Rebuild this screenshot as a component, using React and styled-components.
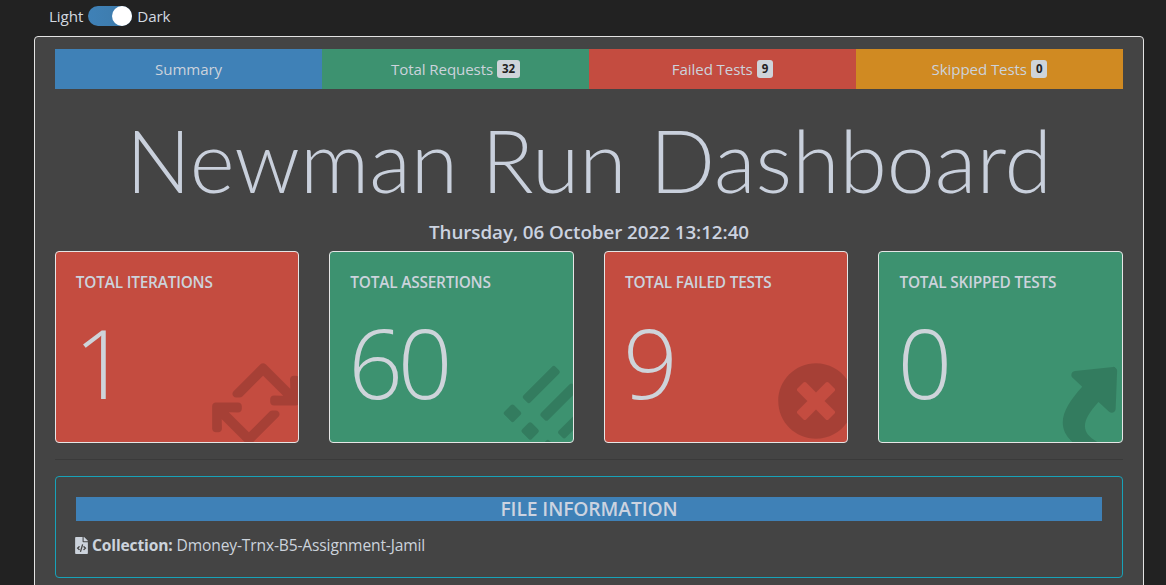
import React from "react";
import styled, { createGlobalStyle } from "styled-components";
import { FaRetweet, FaTimesCircle, FaShare, FaFileCode } from "react-icons/fa";

const Global = createGlobalStyle`
  html, body { margin: 0; height: 585px; overflow: hidden; background: #222222; }
  body { font-family: "Open Sans", "Noto Sans", "Liberation Sans", sans-serif; color: #ced4da; font-size: 15px; }
`;
const colors = { blue: "#3f81b7", green: "#3d9270", red: "#c44c40", orange: "#d08a22" };

const Page = styled.div`display: flex; flex-direction: column; width: 1110px; margin-left: 34px;`;
const ThemeBar = styled.div`display: flex; align-items: center; gap: 5px; height: 33px; padding: 0 0 0 15px;`;
const ThemeLabel = styled.span`font-size: 15.2px; color: #d3d9e0; letter-spacing: -0.1px; line-height: 33px;`;
const Switch = styled.span`display: inline-flex; justify-content: flex-end; align-items: center; width: 44px; height: 20px; border-radius: 10px; background: linear-gradient(90deg, #3f81b7, #3d7aa9); margin-bottom: 1px;`;
const Knob = styled.span`width: 20px; height: 20px; border-radius: 50%; background: #fff;`;
const Panel = styled.main`height: 560px; margin-top: 3px; box-sizing: border-box; padding: 12px 20px 0; background: #444444; border: 1px solid #e4e4e4; border-radius: 4px;`;
const Tabs = styled.nav`display: grid; grid-template-columns: repeat(4, 1fr); height: 40px;`;
const Tab = styled.a`display: flex; align-items: center; justify-content: center; gap: 4px; background: ${p => colors[p.$tone]}; color: #ccd3dc; font-size: 15.1px; letter-spacing: -0.1px;`;
const Badge = styled.span`display: inline-block; padding: 2px 5px 2px; min-width: 5px; text-align: center; border-radius: 3px; background: #ced4da; color: #222; font-size: 11.5px; font-weight: 700; line-height: 14px;`;
const Heading = styled.h1`margin: 18px 0 0; height: 111px; text-align: center; font-family: "Lato", "Open Sans", sans-serif; font-size: 86px; font-weight: 300; line-height: 105px; color: #c9d0dc; white-space: nowrap;`;
const DateLine = styled.h5`margin: 0; text-align: center; font-size: 18.8px; font-weight: 600; line-height: 24px; color: #ccd3e0; letter-spacing: -0.05px; padding-top: 2px;`;
const Cards = styled.section`display: grid; grid-template-columns: repeat(4, 1fr); gap: 30px; margin: 7px 0 0 -0.2px;`;
const Card = styled.article`position: relative; overflow: hidden; box-sizing: border-box; height: 192px; padding: 20px; background: ${p => colors[p.$tone]}; border: 1px solid #e6e6e6; border-radius: 4px;`;
const CardTitle = styled.h6`margin: 0; font-size: 15.4px; font-weight: 600; line-height: 21px; letter-spacing: -0.2px; text-transform: uppercase; color: #ccd3dc;`;
const CardValue = styled.div`margin: 11px 0 0 -2px; font-size: 96px; font-weight: 300; line-height: 115px; color: #ced4da; letter-spacing: -5.5px;`;
const CardIcon = styled.span`
  position: absolute; display: flex; color: rgba(0,0,0,.15);
  right: ${p => p.$right}px; bottom: ${p => p.$bottom}px; transform: rotate(${p => p.$rot}deg);
`;
const Rule = styled.hr`margin: 16px 0; border: 0; border-top: 1px solid #3a3a3a;`;
const InfoCard = styled.section`box-sizing: border-box; height: 102px; padding: 20px; border: 1px solid #17a2b8; border-radius: 4px;`;
const InfoTitle = styled.h5`margin: 0; background: #3f81b7; text-align: center; color: #ccd3e0; font-size: 19.3px; font-weight: 600; line-height: 24px; letter-spacing: -0.1px;`;
const InfoLine = styled.p`display: flex; align-items: center; margin: 13px 0 0; font-size: 15.6px; line-height: 22px; letter-spacing: -0.15px; color: #ccd3dc;`;
const FileIcon = styled(FaFileCode)`margin: 0 -1px 0 -3px;`;
const Strong = styled.strong`font-weight: 700; margin: 0 4px 0 3px;`;

const ListGlyph = ({ size }) => (
  <svg width={size} height={size} viewBox="0 0 512 512" fill="currentColor">
    {[48, 208, 368].map(y => (
      <g key={y}>
        <rect x="0" y={y} width="88" height="88" rx="16" />
        <rect x="160" y={y + 12} width="290" height="64" rx="16" />
      </g>
    ))}
  </svg>
);

const tabs = [["blue", "Summary"], ["green", "Total Requests", 32], ["red", "Failed Tests", 9], ["orange", "Skipped Tests", 0]];
const cards = [
  { tone: "red", title: "Total Iterations", value: 1, Icon: FaRetweet, size: 100, right: -8, bottom: -12, rot: -45 },
  { tone: "green", title: "Total Assertions", value: 60, Icon: ListGlyph, size: 80, right: -21, bottom: -6, rot: -45 },
  { tone: "red", title: "Total Failed Tests", value: 9, Icon: FaTimesCircle, size: 78, right: -8, bottom: 2, rot: 0 },
  { tone: "green", title: "Total Skipped Tests", value: 0, Icon: FaShare, size: 84, right: -13, bottom: -4, rot: -47 },
];

export default function App() {
  return (
    <>
      <Global />
      <Page>
        <ThemeBar>
          <ThemeLabel>Light</ThemeLabel>
          <Switch><Knob /></Switch>
          <ThemeLabel>Dark</ThemeLabel>
        </ThemeBar>
        <Panel>
          <Tabs>
            {tabs.map(([tone, label, n]) => (
              <Tab key={label} $tone={tone}>{label}{n !== undefined && <Badge>{n}</Badge>}</Tab>
            ))}
          </Tabs>
          <Heading>Newman Run Dashboard</Heading>
          <DateLine>Thursday, 06 October 2022 13:12:40</DateLine>
          <Cards>
            {cards.map(c => (
              <Card key={c.title} $tone={c.tone}>
                <CardTitle>{c.title}</CardTitle>
                <CardValue>{c.value}</CardValue>
                <CardIcon $right={c.right} $bottom={c.bottom} $rot={c.rot}><c.Icon size={c.size} /></CardIcon>
              </Card>
            ))}
          </Cards>
          <Rule />
          <InfoCard>
            <InfoTitle>FILE INFORMATION</InfoTitle>
            <InfoLine><FileIcon size={17} /><Strong>Collection:</Strong>Dmoney-Trnx-B5-Assignment-Jamil</InfoLine>
          </InfoCard>
        </Panel>
      </Page>
    </>
  );
}
